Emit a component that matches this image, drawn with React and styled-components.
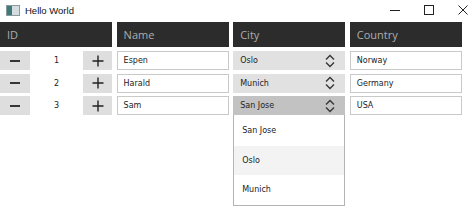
import React from "react";
import styled, { createGlobalStyle } from "styled-components";

const Global = createGlobalStyle`
  html, body { margin: 0; padding: 0; background: #fff; }
  body { font-family: "DejaVu Sans", Verdana, sans-serif; }
`;

const rows = [
  { id: 1, name: "Espen", city: "Oslo", country: "Norway" },
  { id: 2, name: "Harald", city: "Munich", country: "Germany" },
  { id: 3, name: "Sam", city: "San Jose", country: "USA", open: true },
];

const Window = styled.div`
  width: 474px;
  height: 216px;
  background: #fff;
  display: flex;
  flex-direction: column;
`;

const TitleBar = styled.div`
  height: 20px;
  display: flex;
  align-items: center;
  padding-left: 6px;
  font-family: "Liberation Sans", Arial, sans-serif;
  font-size: 9.5px;
  color: #111;
  .controls {
    margin-left: auto;
    padding-right: 4px;
    display: flex;
    gap: 20px;
    align-items: center;
  }
`;

const AppIcon = styled.div`
  width: 12px;
  height: 9px;
  margin-right: 5px;
  border: 1px solid #8a9aa0;
  background: linear-gradient(90deg, #3d7a78 0 45%, #d6dde0 45%);
`;

const Ctl = styled.div`
  width: 14px;
  height: 20px;
  display: flex;
  align-items: center;
  justify-content: center;
`;

const Table = styled.div`
  display: grid;
  grid-template-columns: repeat(4, 112px);
  column-gap: 4.6px;
  row-gap: 3.5px;
  padding-top: 2px;
`;

const Head = styled.div`
  height: 25px;
  background: #2c2c2c;
  color: #adadad;
  font-family: "Open Sans", sans-serif;
  font-size: 11px;
  display: flex;
  align-items: center;
  padding-left: 7px;
  margin-bottom: 0.5px;
`;

const Spin = styled.div`
  height: 19px;
  display: grid;
  grid-template-columns: 30px 1fr 29px;
  font-size: 8px;
  color: #222;
`;

const SpinBtn = styled.div`
  background: #dedede;
  display: flex;
  align-items: center;
  justify-content: center;
`;

const SpinValue = styled.div`
  background: #fff;
  display: flex;
  align-items: center;
  justify-content: center;
`;

const Field = styled.div`
  height: 19px;
  box-sizing: border-box;
  border: 1px solid #c9c9c9;
  background: #fff;
  display: flex;
  align-items: center;
  padding-left: 6px;
  font-size: 8px;
  color: #222;
`;

const ComboWrap = styled.div`
  position: relative;
`;

const Combo = styled.div`
  height: 19px;
  background: ${(p) => (p.$active ? "#c2c2c2" : "#e1e1e1")};
  display: flex;
  align-items: center;
  padding: 0 10px 0 7px;
  font-size: 8px;
  color: #222;
  justify-content: space-between;
`;

const Menu = styled.div`
  position: absolute;
  top: 19px;
  left: 0;
  width: 112px;
  box-sizing: border-box;
  border: 1px solid #b4b4b4;
  border-top: none;
  background: #fff;
  z-index: 2;
  padding-top: 1px;
`;

const MenuItem = styled.div`
  height: 29.5px;
  display: flex;
  align-items: center;
  padding-left: 8px;
  font-size: 8px;
  color: #222;
  background: ${(p) => (p.$hover ? "#f3f3f3" : "#fff")};
`;

const Minus = () => (
  <svg width="12" height="12" viewBox="0 0 12 12">
    <path d="M1 6h10" stroke="#222" strokeWidth="1.8" />
  </svg>
);

const Plus = () => (
  <svg width="12" height="12" viewBox="0 0 12 12">
    <path d="M0.5 6h11M6 0.5v11" stroke="#222" strokeWidth="1.4" />
  </svg>
);

const Chevrons = () => (
  <svg width="10" height="14" viewBox="0 0 10 14">
    <path d="M1 5.5L5 1.5L9 5.5M1 8.5L5 12.5L9 8.5" fill="none" stroke="#333" strokeWidth="1.3" />
  </svg>
);

export default function App() {
  return (
    <>
      <Global />
      <Window>
        <TitleBar>
          <AppIcon />
          Hello World
          <div className="controls">
            <Ctl>
              <svg width="10" height="10" viewBox="0 0 10 10">
                <path d="M0 5.5h10" stroke="#222" strokeWidth="1" />
              </svg>
            </Ctl>
            <Ctl>
              <svg width="10" height="10" viewBox="0 0 10 10">
                <rect x="0.5" y="0.5" width="9" height="9" fill="none" stroke="#222" strokeWidth="1" />
              </svg>
            </Ctl>
            <Ctl>
              <svg width="10" height="10" viewBox="0 0 10 10">
                <path d="M0.5 0.5L9.5 9.5M9.5 0.5L0.5 9.5" stroke="#222" strokeWidth="1" />
              </svg>
            </Ctl>
          </div>
        </TitleBar>
        <Table>
          <Head>ID</Head>
          <Head>Name</Head>
          <Head>City</Head>
          <Head>Country</Head>
          {rows.map((r) => (
            <React.Fragment key={r.id}>
              <Spin>
                <SpinBtn><Minus /></SpinBtn>
                <SpinValue>{r.id}</SpinValue>
                <SpinBtn><Plus /></SpinBtn>
              </Spin>
              <Field>{r.name}</Field>
              <ComboWrap>
                <Combo $active={r.open}>
                  {r.city}
                  <Chevrons />
                </Combo>
                {r.open && (
                  <Menu>
                    <MenuItem>San Jose</MenuItem>
                    <MenuItem $hover>Oslo</MenuItem>
                    <MenuItem>Munich</MenuItem>
                  </Menu>
                )}
              </ComboWrap>
              <Field>{r.country}</Field>
            </React.Fragment>
          ))}
        </Table>
      </Window>
    </>
  );
}
